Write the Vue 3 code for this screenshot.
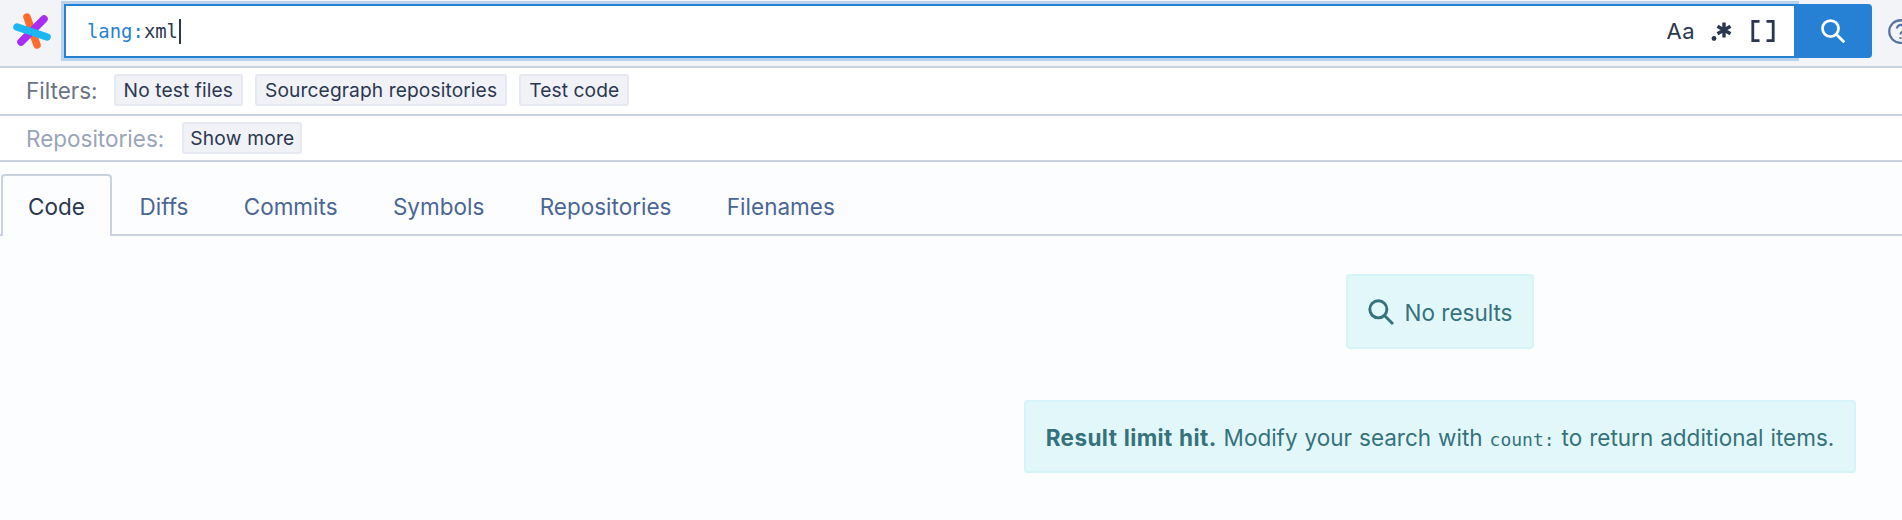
<script setup>
const filters = ['No test files', 'Sourcegraph repositories', 'Test code']
const tabs = ['Code', 'Diffs', 'Commits', 'Symbols', 'Repositories', 'Filenames']
</script>

<template>
  <div class="page">
    <header class="nav">
      <svg class="logo" viewBox="0 0 40 40" width="40" height="40">
        <path d="M15 6 L25 34" stroke="#ff6b2c" stroke-width="7.5" stroke-linecap="round" />
        <path d="M32 8 L9 31" stroke="#a82df0" stroke-width="7.5" stroke-linecap="round" />
        <path d="M5 16 L35 26" stroke="#1cb6f2" stroke-width="7.5" stroke-linecap="round" />
      </svg>
      <div class="search">
        <div class="field">
          <div class="query"><span class="kw">lang:</span><span>xml</span><i class="caret"></i></div>
          <div class="toggles">
            <span class="aa">Aa</span>
            <svg class="rx" viewBox="0 0 24 24" width="24" height="24">
              <circle cx="4" cy="19.500" r="2.400" fill="#2b3750" />
              <path d="M14 3.500v15M7.500 7.250l13 7.500M20.500 7.250l-13 7.500" stroke="#2b3750" stroke-width="3.400" />
            </svg>
            <svg class="br" viewBox="0 0 24 22" width="24" height="22" fill="none" stroke="#2b3750" stroke-width="2.800">
              <path d="M8.500 1.400H1.800v19.200H8.500M15.500 1.400h6.700v19.200H15.500" />
            </svg>
          </div>
        </div>
        <button class="go">
          <svg viewBox="0 0 24 24" width="30" height="30" fill="none" stroke="#fff" stroke-width="2.2">
            <circle cx="10" cy="10" r="6.4" /><path d="M14.6 14.6 L21 21" />
          </svg>
        </button>
      </div>
      <svg class="help" viewBox="0 0 24 24" width="27" height="27" fill="none" stroke="#5b73a0" stroke-width="2">
        <circle cx="12" cy="12" r="10" />
        <path d="M8.8 9.4a3.2 3.2 0 1 1 4.8 2.8c-1 .6-1.6 1.2-1.6 2.4" /><path d="M12 17v1.6" />
      </svg>
    </header>

    <section class="row first">
      <span class="label">Filters:</span>
      <span v-for="f in filters" :key="f" class="chip">{{ f }}</span>
    </section>
    <section class="row second">
      <span class="label muted">Repositories:</span>
      <span class="chip more">Show more</span>
    </section>

    <nav class="tabs">
      <a v-for="(t, i) in tabs" :key="t" class="tab" :class="{ active: i === 0 }">{{ t }}</a>
    </nav>

    <main class="results">
      <div class="alert none">
        <svg viewBox="0 0 24 24" width="32" height="32" fill="none" stroke="#35727c" stroke-width="2.200">
          <circle cx="10" cy="10" r="6.4" /><path d="M14.6 14.6 L21 21" />
        </svg>
        <span>No results</span>
      </div>
      <div class="alert limit">
        <strong>Result limit hit.</strong> Modify your search with <code>count:</code> to return additional items.
      </div>
    </main>
  </div>
</template>

<style>
html, body { margin: 0; overflow: hidden; background: #fbfdff; }
</style>

<style scoped>
.page {
  width: 1902px;
  height: 520px;
  overflow: hidden;
  background: #fbfdff;
  font-family: Inter, "Noto Sans", sans-serif;
  font-size: 22.5px;
  color: #2b3750;
}
.nav {
  display: flex;
  align-items: center;
  height: 68px;
  box-sizing: border-box;
  background: #f2f4f8;
  border-bottom: 2px solid #cad2e2;
  padding: 0 0 4px 12px;
  width: 1960px;
}
.logo { flex: none; width: 40px; height: 40px; }
.search { display: flex; align-items: center; margin-left: 9px; flex: none; }
.field {
  flex: none;
  width: 1738px;
  height: 60px;
  box-sizing: border-box;
  border: 3px solid #b9d3ec;
  background: #fff;
  box-shadow: inset 0 0 0 2px #2680d4;
  display: flex;
  align-items: center;
  justify-content: space-between;
  padding: 0 21px 0 23px;
}
.query {
  display: flex;
  align-items: center;
  font-family: "DejaVu Sans Mono", monospace;
  font-size: 18.9px;
  color: #2b3750;
}
.kw { color: #2680d4; }
.caret { display: inline-block; width: 2px; height: 25px; margin-left: 1px; background: #2b3750; }
.toggles { display: flex; align-items: center; }
.aa { font-size: 22px; letter-spacing: 0.5px; margin-right: 15px; }
.rx { margin-right: 17px; }
.br { display: block; }
.go {
  flex: none;
  width: 78px;
  height: 54px;
  margin-left: -5px;
  border: 0;
  background: #2680d4;
  border-radius: 0 4px 4px 0;
  display: flex;
  align-items: center;
  justify-content: center;
  padding: 0;
  position: relative;
}
.help { flex: none; margin-left: 15px; }
.row {
  display: flex;
  align-items: center;
  box-sizing: border-box;
  background: #fff;
  border-bottom: 2px solid #cad2e2;
  padding-left: 26px;
}
.first { height: 48px; padding-bottom: 2px; }
.second { height: 46px; }
.label { color: #6c7486; margin-right: 16px; }
.muted { margin-right: 18px; color: #9aa5b9; }
.chip {
  font-size: 19.2px;
  letter-spacing: 0.1px;
  line-height: 28px;
  padding: 0 8px;
  margin-right: 12px;
  background: #f0f2f7;
  border: 2px solid #e6e9f1;
  border-radius: 3px;
  color: #2b3750;
}
.more { padding: 0 6px; letter-spacing: 0.2px; }
.tabs {
  display: flex;
  height: 62px;
  box-sizing: border-box;
  margin-top: 12px;
  padding-left: 1px;
  border-bottom: 2px solid #cad2e2;
}
.tab {
  box-sizing: border-box;
  height: 62px;
  padding: 18px 27.700px 0;
  color: #4b6597;
  line-height: 30px;
}
.active {
  color: #2b3750;
  background: #fbfdff;
  border: 2px solid #cad2e2;
  border-bottom: 0;
  border-radius: 4px 4px 0 0;
  padding: 16px 25px 0;
}
.results {
  width: 2880px;
  display: flex;
  flex-direction: column;
  align-items: center;
  padding-top: 38px;
}
.alert {
  box-sizing: border-box;
  background: #e2f7fa;
  border: 2px solid #d5f3f8;
  border-radius: 4px;
  color: #35727c;
}
.none {
  display: flex;
  align-items: center;
  gap: 8px;
  height: 75px;
  padding: 1px 20px 0 17px;
}
.limit {
  margin-top: 51px;
  height: 73px;
  line-height: 72px;
  padding: 0 20px;
  white-space: nowrap;
  word-spacing: 0.65px;
}
.limit strong { letter-spacing: 0.4px; }
.limit code { font-family: "DejaVu Sans Mono", monospace; font-size: 18px; }
</style>
